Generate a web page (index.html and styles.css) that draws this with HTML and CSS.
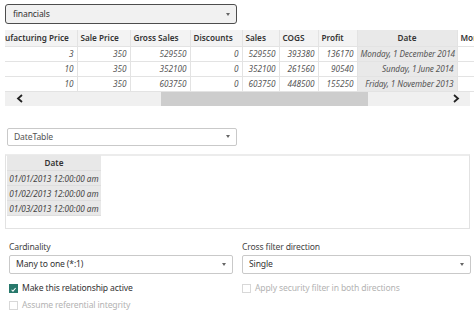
FILE: index.html
```html
<!DOCTYPE html>
<html>
<head>
<meta charset="utf-8">
<link rel="stylesheet" href="styles.css">
</head>
<body>
<div class="select select-main"><span>financials</span><i class="caret"></i></div>

<div class="grid">
  <table class="data">
    <colgroup>
      <col style="width:72px"><col style="width:53px"><col style="width:60px"><col style="width:52px"><col style="width:37px"><col style="width:39px"><col style="width:39px"><col style="width:100px"><col style="width:50px">
    </colgroup>
    <thead>
      <tr><th>ufacturing Price</th><th>Sale Price</th><th>Gross Sales</th><th>Discounts</th><th>Sales</th><th>COGS</th><th>Profit</th><th class="date">Date</th><th class="month">Month</th></tr>
    </thead>
    <tbody>
      <tr><td>3</td><td>350</td><td>529550</td><td>0</td><td>529550</td><td>393380</td><td>136170</td><td class="date">Monday, 1 December 2014</td><td class="month"></td></tr>
      <tr><td>10</td><td>350</td><td>352100</td><td>0</td><td>352100</td><td>261560</td><td>90540</td><td class="date">Sunday, 1 June 2014</td><td class="month"></td></tr>
      <tr><td>10</td><td>350</td><td>603750</td><td>0</td><td>603750</td><td>448500</td><td>155250</td><td class="date">Friday, 1 November 2013</td><td class="month"></td></tr>
    </tbody>
  </table>
  <div class="hscroll">
    <svg class="arrow" width="8" height="9" viewBox="0 0 8 9"><polyline points="6,1 2,4.5 6,8" fill="none" stroke="#222" stroke-width="1.8"/></svg>
    <div class="track"><div class="thumb"></div></div>
    <svg class="arrow" width="8" height="9" viewBox="0 0 8 9"><polyline points="2,1 6,4.5 2,8" fill="none" stroke="#222" stroke-width="1.8"/></svg>
  </div>
</div>

<div class="select select-table"><span>DateTable</span><i class="caret"></i></div>

<div class="preview">
  <table class="prev">
    <thead><tr><th>Date</th></tr></thead>
    <tbody>
      <tr><td>01/01/2013 12:00:00 am</td></tr>
      <tr><td>01/02/2013 12:00:00 am</td></tr>
      <tr><td>01/03/2013 12:00:00 am</td></tr>
    </tbody>
  </table>
</div>

<div class="rel">
  <div class="col">
    <div class="label">Cardinality</div>
    <div class="select select-opt"><span>Many to one (*:1)</span><i class="caret"></i></div>
    <div class="check on"><span class="box"><svg width="9" height="9" viewBox="0 0 9 9"><polyline points="2,4.8 3.8,6.6 7.2,2.6" fill="none" stroke="#fff" stroke-width="1.3"/></svg></span><span>Make this relationship active</span></div>
    <div class="check off"><span class="box"></span><span>Assume referential integrity</span></div>
  </div>
  <div class="col">
    <div class="label">Cross filter direction</div>
    <div class="select select-opt"><span>Single</span><i class="caret"></i></div>
    <div class="check off"><span class="box"></span><span>Apply security filter in both directions</span></div>
  </div>
</div>
</body>
</html>
```
FILE: styles.css
```css
* { box-sizing: border-box; }
body {
  margin: 0;
  padding-top: 4px;
  width: 474px;
  height: 320px;
  overflow: hidden;
  background: #fff;
  font-family: "Noto Sans", "Open Sans", sans-serif;
  color: #333;
}
.select {
  display: flex;
  align-items: center;
  justify-content: space-between;
  background: #fff;
  border: 1px solid #c9c9c9;
  border-radius: 2px;
  font-size: 8.6px;
  letter-spacing: -0.15px;
  padding: 0 6px 0 6px;
}
.caret {
  width: 0; height: 0;
  border-left: 2.5px solid transparent;
  border-right: 2.5px solid transparent;
  border-top: 3px solid #666;
}
.select-main {
  margin-left: 5px;
  width: 232px;
  height: 20px;
  background: #f1f1f1;
  border: 1.5px solid #4d4d4d;
  border-radius: 3px;
  padding-left: 7px;
  color: #333;
}
.grid {
  margin: 6px 0 0 5px;
  width: 469px;
  overflow: hidden;
}
.data {
  border-collapse: collapse;
  table-layout: fixed;
  width: 502px;
  font-size: 8.2px;
}
.data th, .data td {
  height: 15px;
  padding: 0 3px;
  border-right: 1px solid #e3e3e3;
  border-bottom: 1px solid #e3e3e3;
  white-space: nowrap;
  overflow: hidden;
}
.data th {
  height: 16px;
  text-align: left;
  font-weight: 600;
  background: #f3f3f3;
  color: #333;
}
.data th:first-child { padding-left: 0; }
.data td {
  text-align: right;
  font-style: italic;
  color: #555;
}
.data .date { background: #e9e9e9; }
.data td.date { font-size: 8.2px; padding-right: 3px; letter-spacing: -0.1px; }
.data th.date { text-align: center; }
.data .month { background: #fff; }
.hscroll {
  display: flex;
  align-items: center;
  height: 14px;
  background: #f0f0f0;
  width: 465px;
}
.arrow { flex: none; margin: 0 10px 0 11px; }
.track { flex: 1; height: 100%; }
.thumb {
  margin-left: 127px;
  width: 207px;
  height: 100%;
  background: #cdcdcd;
}
.select-table {
  margin: 22px 0 0 7px;
  width: 230px;
  height: 18px;
  color: #555;
}
.preview {
  margin: 8px 0 0 5px;
  width: 465px;
  height: 75px;
  border: 1px solid #e2e2e2;
  border-top-width: 2px;
  border-top-color: #ececec;
  padding-left: 1px;
}
.prev {
  border-collapse: collapse;
  width: 94px;
  background: #e8e8e8;
  font-size: 8.2px;
  margin-top: -1px;
}
.prev th {
  height: 16px;
  font-weight: 600;
  color: #333;
  border-bottom: 1px solid #dedede;
}
.prev td {
  height: 15px;
  font-style: italic;
  color: #444;
  text-align: center;
  white-space: nowrap;
  border-bottom: 1px solid #dedede;
}
.rel {
  display: grid;
  grid-template-columns: 224px 229px;
  column-gap: 9px;
  margin-top: 11px;
  padding-left: 9px;
}
.label {
  font-size: 8.6px;
  letter-spacing: -0.15px;
  color: #444;
  height: 14px;
  line-height: 14px;
}
.select-opt {
  margin-top: 1px;
  height: 19px;
  color: #333;
}
.check {
  display: flex;
  align-items: center;
  gap: 4px;
  font-size: 8.6px;
  letter-spacing: -0.15px;
  height: 17px;
}
.select-opt + .check { margin-top: 6px; }
.box {
  width: 9px;
  height: 9px;
  flex: none;
  border: 1px solid #d8d8d8;
  display: flex;
}
.check.on .box { background: #27786b; border-color: #27786b; }
.check.on { color: #333; }
.check.off { color: #b3b3b3; }
```
